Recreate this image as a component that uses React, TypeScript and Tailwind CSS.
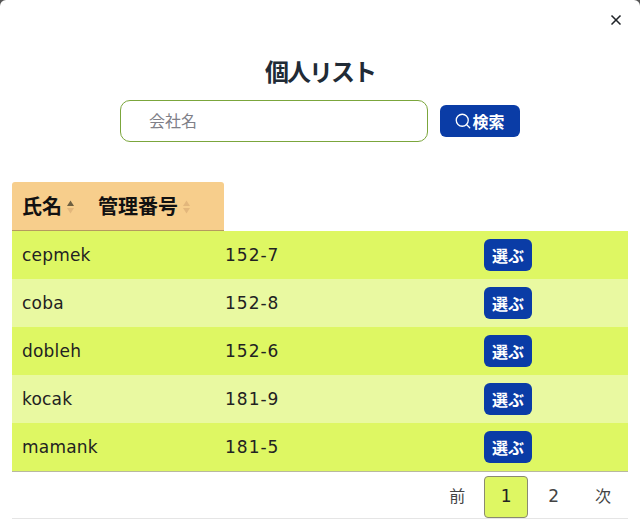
import { Search, X } from "lucide-react";

const people = [
  { name: "cepmek", no: "152-7" },
  { name: "coba", no: "152-8" },
  { name: "dobleh", no: "152-6" },
  { name: "kocak", no: "181-9" },
  { name: "mamank", no: "181-5" },
];

function SortIcon({ active }: { active?: boolean }) {
  return (
    <svg width="9" height="16" viewBox="0 0 9 16" className="ml-[4px] mt-[1px]">
      <path d="M4.5 1.5 L8 7 L1 7 Z" fill={active ? "#6f6040" : "#e3b77c"} />
      <path d="M4.5 14.5 L8 9 L1 9 Z" fill="#e3b77c" />
    </svg>
  );
}

export default function App() {
  return (
    <div className="w-[640px] h-[522px] bg-[#555] overflow-hidden font-['DejaVu_Sans','Noto_Sans_CJK_JP',sans-serif] text-[#212529]">
      <div className="h-full bg-white rounded-t-[6px] flex flex-col">
        <div className="flex justify-end pt-[12px] pr-[16px] h-[56px]">
          <X className="w-4 h-4 text-[#212529]" strokeWidth={2.5} />
        </div>
        <h2 className="text-center text-[24px] leading-[30px] tracking-[-2px] font-bold text-[#212b36] font-['Noto_Sans_CJK_JP',sans-serif]">
          個人リスト
        </h2>
        <div className="flex items-center justify-center gap-3 mt-[14px]">
          <input
            placeholder="会社名"
            className="w-[308px] h-[42px] rounded-[10px] border border-[#7ba63c] pl-[28px] pb-[2px] text-[16px] outline-none placeholder:text-[#808088] font-['Noto_Sans_CJK_JP',sans-serif]"
          />
          <button className="w-[80px] h-[32px] pb-[1px] rounded-[6px] bg-[#0a3ca6] text-white text-[16px] font-bold flex items-center justify-center font-['Noto_Sans_CJK_JP',sans-serif]">
            <Search className="w-[18px] h-[18px] -ml-[1px]" strokeWidth={1.75} />
            検索
          </button>
        </div>

        <div className="mx-[12px] mt-[40px]">
          <div className="w-[212px] h-[49px] bg-[#f7ce8c] border-b border-[#b59a5e] rounded-t-[3px] flex items-center pl-[10px] text-[20px] font-bold text-[#111] font-['Noto_Sans_CJK_JP',sans-serif]">
            <span>氏名</span>
            <SortIcon active />
            <span className="ml-[23px]">管理番号</span>
            <SortIcon />
          </div>
          {people.map((p, i) => (
            <div
              key={p.name}
              className={`h-[48px] flex items-center text-[17px] text-[#222] ${i % 2 === 0 ? "bg-[#def763]" : "bg-[#e9f9a1]"}`}
            >
              <span className="w-[213px] pl-[10px] pt-[1px] tracking-[0.2px]">{p.name}</span>
              <span className="w-[259px] pt-[1px] tracking-[1px]">{p.no}</span>
              <button className="w-[48px] h-[32px] pb-[1px] rounded-[6px] bg-[#0a3ca6] text-white text-[16px] font-bold font-['Noto_Sans_CJK_JP',sans-serif]">
                選ぶ
              </button>
            </div>
          ))}
          <div className="h-[48px] border-t border-b border-t-[#b8b8a0] border-b-[#e5e5e5] flex items-center justify-end text-[16px] text-[#444] font-['Noto_Sans_CJK_JP',sans-serif]">
            <span className="mr-[19px]">前</span>
            <span className="w-[44px] h-[42px] mt-[4px] flex items-center justify-center bg-[#def763] border border-[#8a8a70] rounded-[4px] text-[#222] text-[17px] font-['DejaVu_Sans',sans-serif]">
              1
            </span>
            <span className="ml-[20px] mt-[3px] text-[17px] font-['DejaVu_Sans',sans-serif]">2</span>
            <span className="ml-[36px] mr-[17px]">次</span>
          </div>
        </div>
      </div>
    </div>
  );
}
